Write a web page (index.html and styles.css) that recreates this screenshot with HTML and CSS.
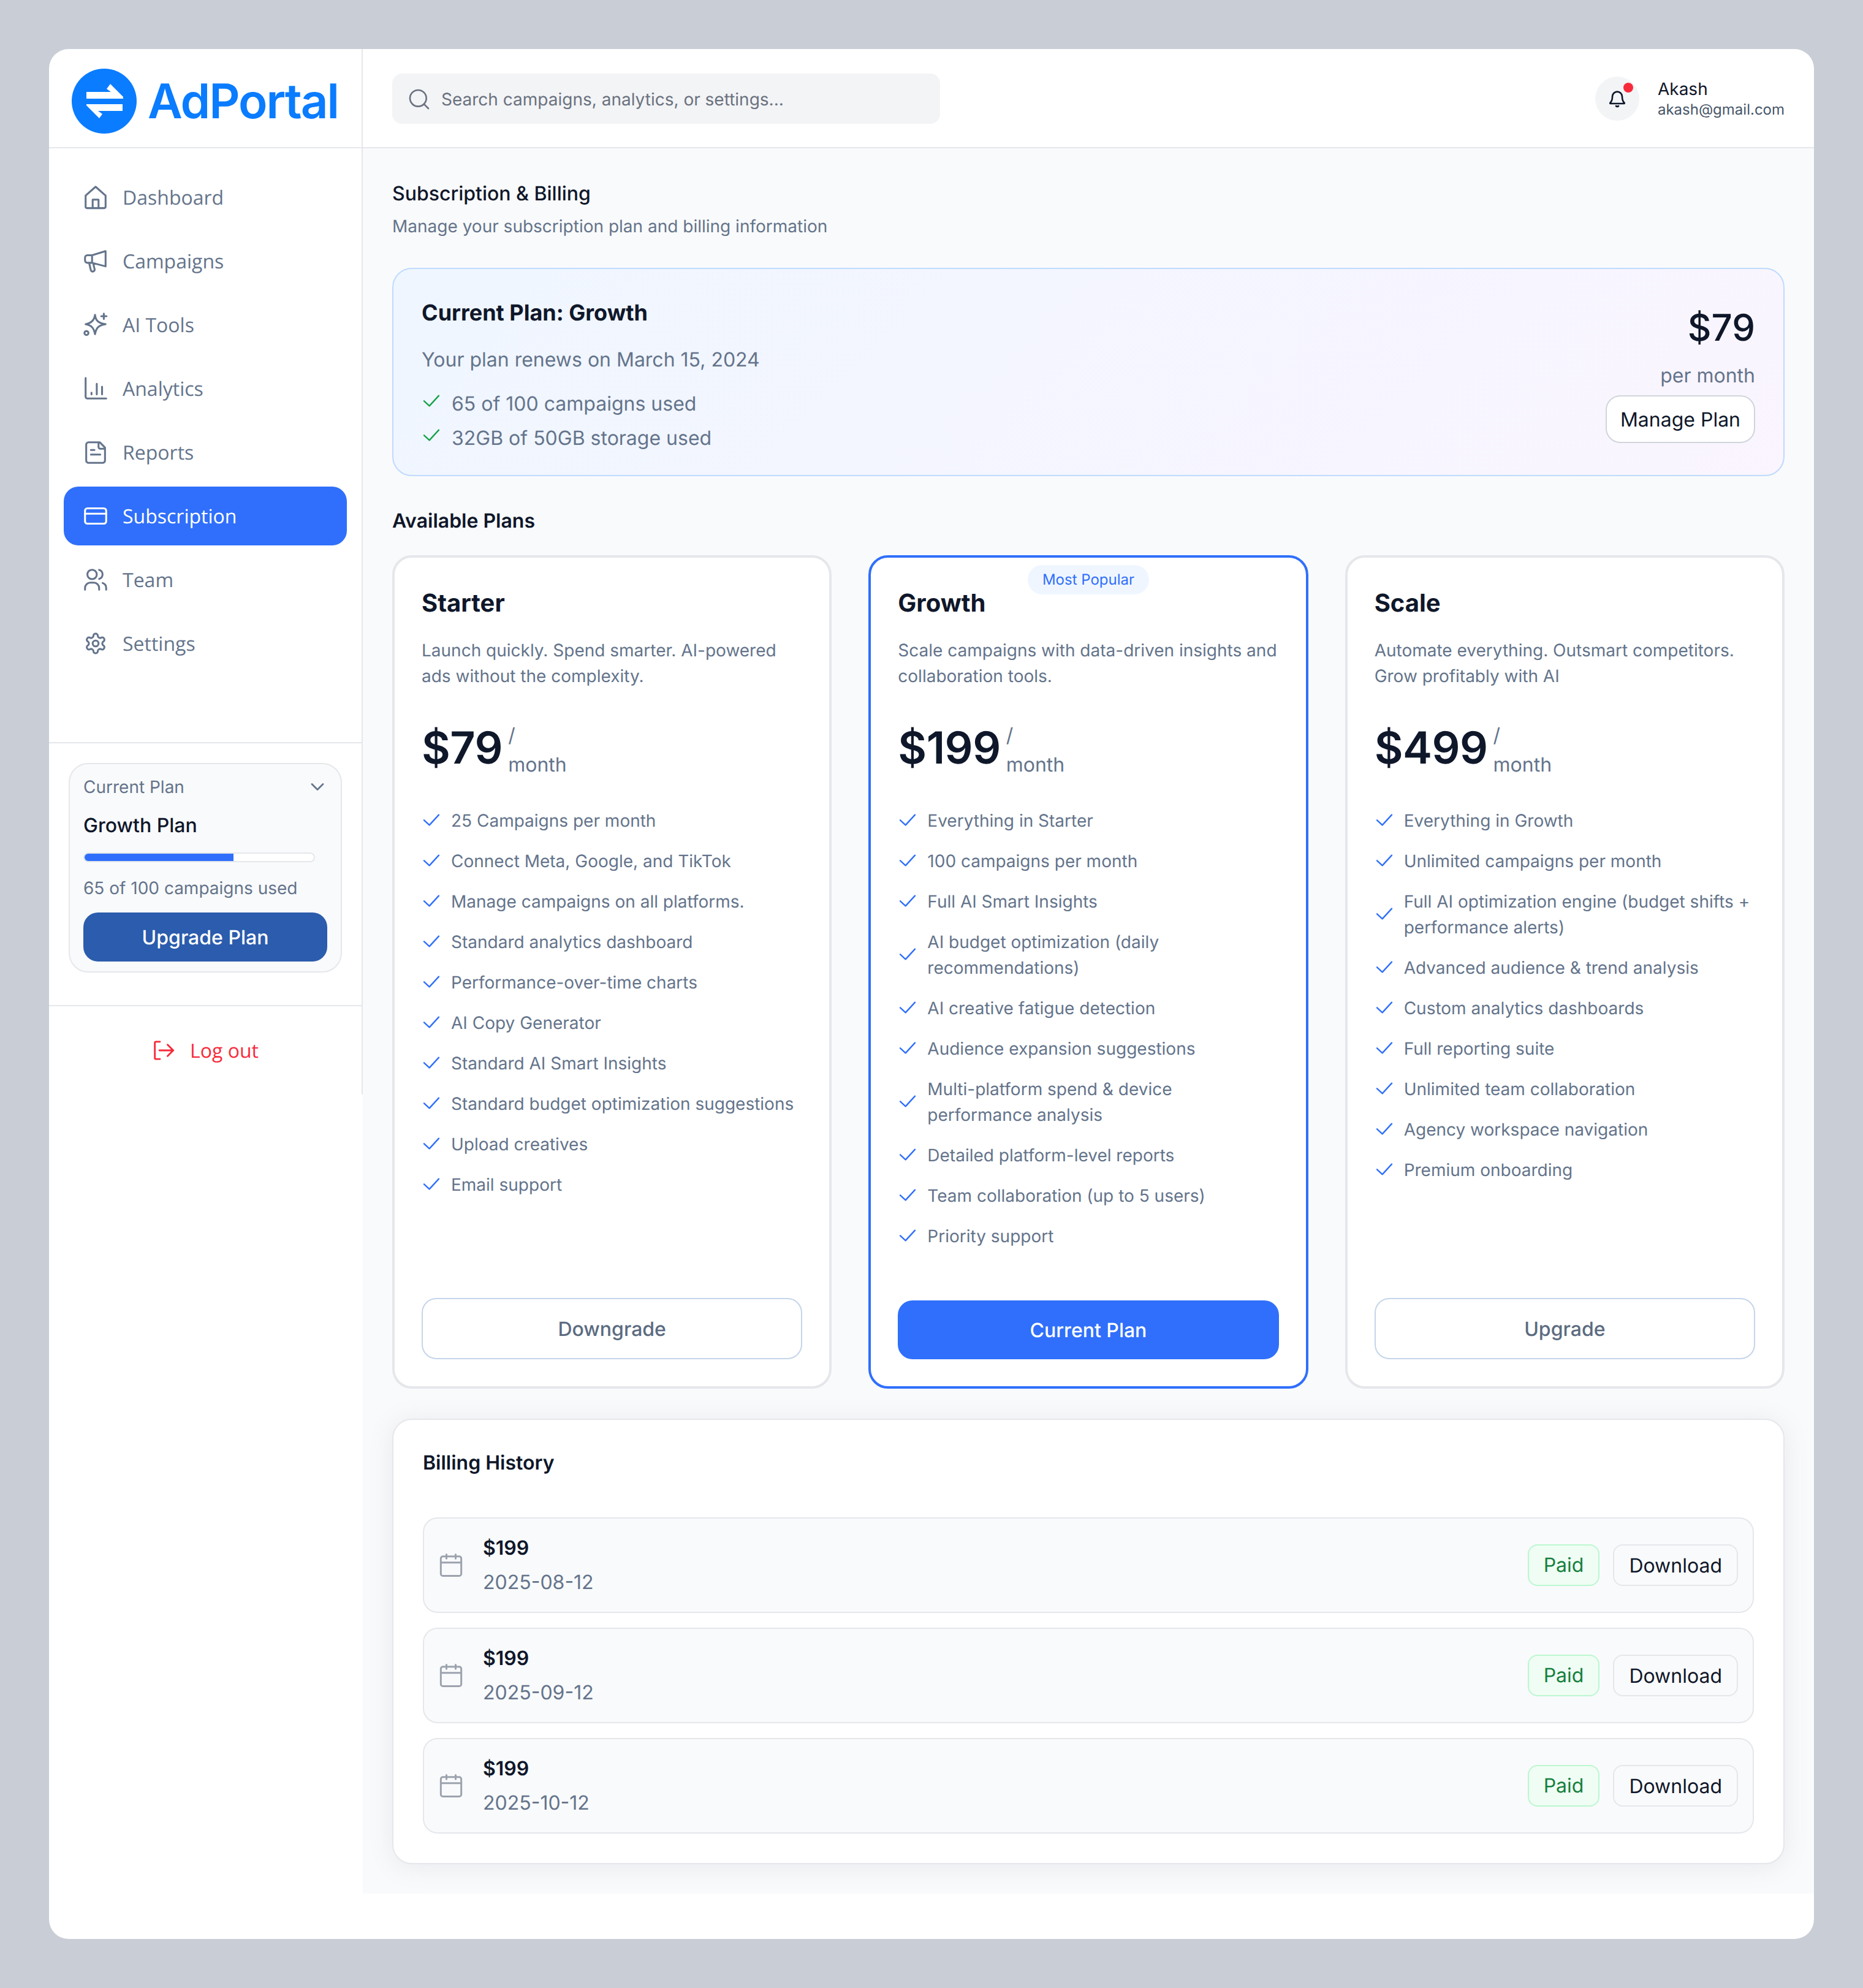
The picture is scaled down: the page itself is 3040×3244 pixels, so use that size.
FILE: index.html
```html
<!DOCTYPE html>
<html lang="en">
<head>
<meta charset="utf-8">
<title>AdPortal - Subscription &amp; Billing</title>
<link rel="stylesheet" href="styles.css">
</head>
<body>
<svg class="defs" aria-hidden="true">
  <symbol id="i-check" viewBox="0 0 24 24"><path d="M21 5 9.5 17.5 3 11.5"/></symbol>
  <symbol id="i-cal" viewBox="0 0 24 24"><rect x="2" y="3.5" width="20" height="19" rx="2"/><path d="M2 9.5h20M7.5 1.5v4M16.5 1.5v4"/></symbol>
</svg>
<div class="frame">
  <aside class="sidebar">
    <div class="brand">
      <svg class="brand-mark" viewBox="0 0 106 106"><circle cx="53" cy="53" r="53" fill="#0a7cff"/><path fill="#fff" d="M24 38h40l-7-5 6-8 21 21v3H24zM83 58v11H43l7 5-5 7-21-21v-2z"/></svg>
      <span class="brand-name">AdPortal</span>
    </div>
    <nav class="nav">
      <a class="nav-item"><svg class="nav-ic" viewBox="0 0 24 24"><path d="M3.5 10.5 12 3l8.500 7.500V20a1.200 1.200 0 0 1-1.200 1.200H4.700A1.200 1.200 0 0 1 3.500 20zM9.500 21v-7h5v7"/></svg>Dashboard</a>
      <a class="nav-item"><svg class="nav-ic" viewBox="0 0 24 24"><path d="M20.500 3.500 9 7H5a2 2 0 0 0-2 2v2.500a2 2 0 0 0 2 2h4l11.500 3zM9 7v6.500M6.500 13.500 8 20a1.700 1.700 0 0 0 3.200-.8L10 14"/></svg>Campaigns</a>
      <a class="nav-item"><svg class="nav-ic" viewBox="0 0 24 24"><path d="M11.500 3.500c.5 4.500 2.300 7 9 8-6 1-8 3-9 8.500-1-5.500-3-7.500-8-8.500 5-1 7.500-3.500 8-8zM19 2.500v4.500M16.800 4.700h4.500"/><circle cx="4.200" cy="19" r="1.700"/></svg>AI Tools</a>
      <a class="nav-item"><svg class="nav-ic" viewBox="0 0 24 24"><path d="M3.500 3v16a1.500 1.500 0 0 0 1.500 1.500h16M8.500 15.500V17M13 8v9M17.500 10.500V17"/></svg>Analytics</a>
      <a class="nav-item"><svg class="nav-ic" viewBox="0 0 24 24"><path d="M6 3.500h9.500L20 8v11a2 2 0 0 1-2 2H6a2 2 0 0 1-2-2V5.500a2 2 0 0 1 2-2zM14.500 4v3.500A1.500 1.500 0 0 0 16 9h3.500M8 10h3M8 14h8"/></svg>Reports</a>
      <a class="nav-item is-active"><svg class="nav-ic" viewBox="0 0 24 24"><rect x="3" y="5.500" width="18" height="13" rx="2"/><path d="M3 10h18"/></svg>Subscription</a>
      <a class="nav-item"><svg class="nav-ic" viewBox="0 0 24 24"><path d="M9 11.500a4 4 0 1 0 0-8 4 4 0 0 0 0 8zM3 20.500V19a4.500 4.500 0 0 1 4.500-4.500h3a4.500 4.500 0 0 1 4.500 4.500v1.500M15 3.600a4 4 0 0 1 0 7.700M18 14.800a4.500 4.500 0 0 1 3 4.200v1.500"/></svg>Team</a>
      <a class="nav-item"><svg class="nav-ic nav-ic-cog" viewBox="-2.400 -2.400 28.800 28.800"><path d="M12.220 2h-.44a2 2 0 0 0-2 2v.18a2 2 0 0 1-1 1.730l-.43.25a2 2 0 0 1-2 0l-.15-.08a2 2 0 0 0-2.730.73l-.22.38a2 2 0 0 0 .73 2.730l.15.1a2 2 0 0 1 1 1.720v.51a2 2 0 0 1-1 1.740l-.15.09a2 2 0 0 0-.73 2.730l.22.38a2 2 0 0 0 2.730.73l.15-.08a2 2 0 0 1 2 0l.43.25a2 2 0 0 1 1 1.730V20a2 2 0 0 0 2 2h.44a2 2 0 0 0 2-2v-.18a2 2 0 0 1 1-1.730l.43-.25a2 2 0 0 1 2 0l.15.08a2 2 0 0 0 2.730-.73l.22-.39a2 2 0 0 0-.73-2.730l-.15-.08a2 2 0 0 1-1-1.740v-.5a2 2 0 0 1 1-1.740l.15-.09a2 2 0 0 0 .73-2.730l-.22-.38a2 2 0 0 0-2.730-.73l-.15.08a2 2 0 0 1-2 0l-.43-.25a2 2 0 0 1-1-1.730V4a2 2 0 0 0-2-2z"/><circle cx="12" cy="12" r="3"/></svg>Settings</a>
    </nav>
    <section class="side-plan">
      <div class="plan-box">
        <div class="plan-box-top"><span>Current Plan</span><svg class="chev" viewBox="0 0 24 24"><path d="m6 9 6 6 6-6"/></svg></div>
        <div class="plan-box-name">Growth Plan</div>
        <div class="progress"><div class="progress-fill"></div></div>
        <div class="plan-box-use">65 of 100 campaigns used</div>
        <button class="btn-upgrade">Upgrade Plan</button>
      </div>
    </section>
    <div class="logout">
      <svg class="logout-ic" viewBox="0 0 24 24"><path d="M9 3.500H5a1 1 0 0 0-1 1v15a1 1 0 0 0 1 1h4M8.500 12H22M16.500 6.500 22 12l-5.500 5.500"/></svg>
      <span>Log out</span>
    </div>
  </aside>
  <div class="column">
    <header class="topbar">
      <div class="search">
        <svg class="search-ic" viewBox="0 0 24 24"><circle cx="11" cy="11" r="8"/><path d="m21 21-4.300-4.300"/></svg>
        <span>Search campaigns, analytics, or settings...</span>
      </div>
      <div class="user">
        <div class="bell">
          <svg class="bell-ic" viewBox="0 0 24 24"><path d="M6 9.500a6 6 0 0 1 12 0c0 4.500 1.300 6.300 2.700 7.700.3.300.1.800-.3.800H3.600c-.4 0-.6-.5-.3-.8C4.700 15.800 6 14 6 9.500zM10.500 21a2 2 0 0 0 3 0"/></svg>
          <span class="bell-dot"></span>
        </div>
        <div class="user-info">
          <div class="user-name">Akash</div>
          <div class="user-mail">akash@gmail.com</div>
        </div>
      </div>
    </header>
    <main class="content">
      <h1 class="page-title">Subscription &amp; Billing</h1>
      <p class="page-sub">Manage your subscription plan and billing information</p>

      <section class="current">
        <div class="current-left">
          <h2 class="current-title">Current Plan: Growth</h2>
          <p class="current-renew">Your plan renews on March 15, 2024</p>
          <ul class="current-list">
            <li><svg class="tick tick-green"><use href="#i-check"/></svg>65 of 100 campaigns used</li>
            <li><svg class="tick tick-green"><use href="#i-check"/></svg>32GB of 50GB storage used</li>
          </ul>
        </div>
        <div class="current-right">
          <div class="current-price">$79</div>
          <div class="current-per">per month</div>
          <button class="btn-manage">Manage Plan</button>
        </div>
      </section>

      <h2 class="section-title">Available Plans</h2>
      <div class="plans">
        <article class="plan">
          <h3 class="plan-name">Starter</h3>
          <p class="plan-desc">Launch quickly. Spend smarter. AI-powered ads without the complexity.</p>
          <div class="plan-price"><span class="amount">$79</span><span class="per">/ month</span></div>
          <ul class="features">
            <li><svg class="tick"><use href="#i-check"/></svg><span>25 Campaigns per month</span></li>
            <li><svg class="tick"><use href="#i-check"/></svg><span>Connect Meta, Google, and TikTok</span></li>
            <li><svg class="tick"><use href="#i-check"/></svg><span>Manage campaigns on all platforms.</span></li>
            <li><svg class="tick"><use href="#i-check"/></svg><span>Standard analytics dashboard</span></li>
            <li><svg class="tick"><use href="#i-check"/></svg><span>Performance-over-time charts</span></li>
            <li><svg class="tick"><use href="#i-check"/></svg><span>AI Copy Generator</span></li>
            <li><svg class="tick"><use href="#i-check"/></svg><span>Standard AI Smart Insights</span></li>
            <li><svg class="tick"><use href="#i-check"/></svg><span>Standard budget optimization suggestions</span></li>
            <li><svg class="tick"><use href="#i-check"/></svg><span>Upload creatives</span></li>
            <li><svg class="tick"><use href="#i-check"/></svg><span>Email support</span></li>
          </ul>
          <button class="btn-plan">Downgrade</button>
        </article>
        <article class="plan plan-featured">
          <span class="badge">Most Popular</span>
          <h3 class="plan-name">Growth</h3>
          <p class="plan-desc">Scale campaigns with data-driven insights and collaboration tools.</p>
          <div class="plan-price"><span class="amount">$199</span><span class="per">/ month</span></div>
          <ul class="features">
            <li><svg class="tick"><use href="#i-check"/></svg><span>Everything in Starter</span></li>
            <li><svg class="tick"><use href="#i-check"/></svg><span>100 campaigns per month</span></li>
            <li><svg class="tick"><use href="#i-check"/></svg><span>Full AI Smart Insights</span></li>
            <li><svg class="tick"><use href="#i-check"/></svg><span>AI budget optimization (daily recommendations)</span></li>
            <li><svg class="tick"><use href="#i-check"/></svg><span>AI creative fatigue detection</span></li>
            <li><svg class="tick"><use href="#i-check"/></svg><span>Audience expansion suggestions</span></li>
            <li><svg class="tick"><use href="#i-check"/></svg><span>Multi-platform spend &amp; device performance analysis</span></li>
            <li><svg class="tick"><use href="#i-check"/></svg><span>Detailed platform-level reports</span></li>
            <li><svg class="tick"><use href="#i-check"/></svg><span>Team collaboration (up to 5 users)</span></li>
            <li><svg class="tick"><use href="#i-check"/></svg><span>Priority support</span></li>
          </ul>
          <button class="btn-plan btn-plan-primary">Current Plan</button>
        </article>
        <article class="plan">
          <h3 class="plan-name">Scale</h3>
          <p class="plan-desc">Automate everything. Outsmart competitors. Grow profitably with AI</p>
          <div class="plan-price"><span class="amount">$499</span><span class="per">/ month</span></div>
          <ul class="features">
            <li><svg class="tick"><use href="#i-check"/></svg><span>Everything in Growth</span></li>
            <li><svg class="tick"><use href="#i-check"/></svg><span>Unlimited campaigns per month</span></li>
            <li><svg class="tick"><use href="#i-check"/></svg><span>Full AI optimization engine (budget shifts + performance alerts)</span></li>
            <li><svg class="tick"><use href="#i-check"/></svg><span>Advanced audience &amp; trend analysis</span></li>
            <li><svg class="tick"><use href="#i-check"/></svg><span>Custom analytics dashboards</span></li>
            <li><svg class="tick"><use href="#i-check"/></svg><span>Full reporting suite</span></li>
            <li><svg class="tick"><use href="#i-check"/></svg><span>Unlimited team collaboration</span></li>
            <li><svg class="tick"><use href="#i-check"/></svg><span>Agency workspace navigation</span></li>
            <li><svg class="tick"><use href="#i-check"/></svg><span>Premium onboarding</span></li>
          </ul>
          <button class="btn-plan">Upgrade</button>
        </article>
      </div>

      <section class="billing">
        <h2 class="billing-title">Billing History</h2>
        <div class="bill-row">
          <svg class="cal"><use href="#i-cal"/></svg>
          <div class="bill-info"><div class="bill-amount">$199</div><div class="bill-date">2025-08-12</div></div>
          <span class="paid">Paid</span><button class="btn-dl">Download</button>
        </div>
        <div class="bill-row">
          <svg class="cal"><use href="#i-cal"/></svg>
          <div class="bill-info"><div class="bill-amount">$199</div><div class="bill-date">2025-09-12</div></div>
          <span class="paid">Paid</span><button class="btn-dl">Download</button>
        </div>
        <div class="bill-row">
          <svg class="cal"><use href="#i-cal"/></svg>
          <div class="bill-info"><div class="bill-amount">$199</div><div class="bill-date">2025-10-12</div></div>
          <span class="paid">Paid</span><button class="btn-dl">Download</button>
        </div>
      </section>
    </main>
  </div>
</div>
</body>
</html>
```
FILE: styles.css
```css
* { box-sizing: border-box; }
html, body { margin: 0; padding: 0; }
body {
  width: 3040px;
  height: 3244px;
  padding: 80px;
  background: #c9cdd6;
  font-family: "Inter", "Liberation Sans", sans-serif;
  color: #0f172a;
  text-rendering: geometricPrecision;
}
h1, h2, h3, p, ul { margin: 0; padding: 0; }
ul { list-style: none; }
button { font-family: inherit; cursor: pointer; text-rendering: geometricPrecision; }
.defs { position: absolute; width: 0; height: 0; }

.frame {
  display: flex;
  align-items: flex-start;
  width: 2880px;
  height: 3084px;
  background: #fff;
  border-radius: 32px;
  overflow: hidden;
}

/* Sidebar */
.sidebar {
  flex: 0 0 512px;
  height: 1706px;
  border-right: 2px solid #e5e7eb;
  display: flex;
  flex-direction: column;
}
.brand {
  height: 162px;
  border-bottom: 2px solid #e5e7eb;
  display: flex;
  align-items: center;
  gap: 18px;
  padding: 9px 0 0 37px;
}
.brand-mark { width: 106px; height: 106px; flex: none; }
.brand-name {
  font-size: 78px;
  font-weight: 600;
  color: #0a7cff;
  letter-spacing: -2px;
  line-height: 1;
}
.nav {
  height: 969px;
  padding: 32px 24px 0;
  display: flex;
  flex-direction: column;
  gap: 8px;
}
.nav-item {
  height: 96px;
  border-radius: 24px;
  display: flex;
  align-items: center;
  gap: 21px;
  padding-left: 29px;
  font-family: "Open Sans", "Liberation Sans", sans-serif;
  font-size: 32px;
  color: #64748b;
}
.nav-ic {
  width: 46px;
  height: 46px;
  flex: none;
  fill: none;
  stroke: currentColor;
  stroke-width: 1.6;
  stroke-linecap: round;
  stroke-linejoin: round;
}
.nav-ic-cog { stroke-width: 1.9; }
.nav-item.is-active { background: #2f6ffb; color: #fff; }

.side-plan {
  height: 431px;
  padding: 32px 32px 0;
  border-top: 2px solid #e5e7eb;
  border-bottom: 2px solid #e5e7eb;
}
.plan-box {
  height: 342px;
  border: 2px solid #e5e7eb;
  border-radius: 32px;
  background: #f9fafb;
  padding: 16px 22px 0;
}
.plan-box-top {
  display: flex;
  justify-content: space-between;
  align-items: center;
  font-size: 28px;
  line-height: 42px;
  color: #64748b;
}
.chev {
  width: 36px;
  height: 36px;
  margin-right: -2px;
  fill: none;
  stroke: #64748b;
  stroke-width: 1.8;
  stroke-linecap: round;
  stroke-linejoin: round;
}
.plan-box-name {
  margin-top: 18px;
  font-size: 32px;
  font-weight: 500;
  line-height: 48px;
}
.progress {
  width: 378px;
  height: 16px;
  margin-top: 20px;
  border: 2px solid #e5e7eb;
  border-radius: 8px;
  background: #fff;
  overflow: hidden;
}
.progress-fill { width: 65%; height: 100%; background: #2f6ffb; }
.plan-box-use {
  margin-top: 21px;
  font-size: 28px;
  line-height: 42px;
  color: #64748b;
}
.btn-upgrade {
  display: block;
  width: 398px;
  height: 80px;
  margin-top: 19px;
  border: 0;
  border-radius: 24px;
  background: #2b5cad;
  color: #fff;
  font-size: 32px;
  font-weight: 500;
}
.logout {
  flex: 1;
  display: flex;
  align-items: center;
  justify-content: center;
  gap: 24px;
  padding-right: 2px;
  font-family: "Open Sans", "Liberation Sans", sans-serif;
  font-size: 32px;
  color: #f72a3a;
}
.logout-ic {
  width: 40px;
  height: 40px;
  fill: none;
  stroke: currentColor;
  stroke-width: 1.7;
  stroke-linecap: round;
  stroke-linejoin: round;
}

/* Column */
.column { flex: 1; min-width: 0; }
.topbar {
  height: 162px;
  padding: 0 48px;
  border-bottom: 2px solid #e5e7eb;
  display: flex;
  align-items: center;
  justify-content: space-between;
}
.search {
  width: 894px;
  height: 82px;
  margin-top: 2px;
  padding-top: 1px;
  border-radius: 16px;
  background: #f3f4f6;
  display: flex;
  align-items: center;
  gap: 16px;
  padding-left: 24px;
  font-size: 28px;
  color: #6b7280;
}
.search-ic {
  width: 40px;
  height: 40px;
  fill: none;
  stroke: #6b7280;
  stroke-width: 1.6;
  stroke-linecap: round;
}
.user { display: flex; align-items: center; gap: 30px; margin-top: 2px; }
.bell {
  position: relative;
  width: 72px;
  height: 72px;
  border-radius: 50%;
  background: #f3f4f6;
  display: flex;
  align-items: center;
  justify-content: center;
}
.bell-ic {
  width: 32px;
  height: 32px;
  fill: none;
  stroke: #0f172a;
  stroke-width: 2;
  stroke-linecap: round;
  stroke-linejoin: round;
}
.bell-dot {
  position: absolute;
  top: 10px;
  right: 10px;
  width: 16px;
  height: 16px;
  border-radius: 50%;
  background: #f72a3a;
}
.user-name { font-size: 28px; line-height: 36px; }
.user-mail { font-size: 24px; line-height: 32px; color: #475569; }

.content { background: #f9fafb; padding: 50px 48px 48px; }
.page-title { font-size: 32px; font-weight: 500; line-height: 48px; }
.page-sub { margin-top: 8px; font-size: 28px; line-height: 42px; color: #64748b; }

.current {
  margin-top: 47px;
  height: 340px;
  border: 2px solid #bfdbfe;
  border-radius: 32px;
  background: linear-gradient(135deg, #eff6ff, #faf5ff);
  padding: 44px 46px 0;
  display: flex;
  justify-content: space-between;
  align-items: flex-start;
}
.current-title { font-size: 36px; font-weight: 700; line-height: 54px; }
.current-renew { margin-top: 26px; font-size: 32px; line-height: 48px; color: #64748b; }
.current-list { margin-top: 24px; display: flex; flex-direction: column; gap: 8px; }
.current-list li {
  display: flex;
  align-items: flex-start;
  gap: 17px;
  font-size: 32px;
  line-height: 48px;
  color: #64748b;
}
.current-list .tick { margin-top: 4px; }
.tick {
  width: 32px;
  height: 32px;
  flex: none;
  fill: none;
  stroke: #2f6ffb;
  stroke-width: 1.8;
  stroke-linecap: round;
  stroke-linejoin: round;
}
.tick-green { stroke: #16a34a; }
.current-right { display: flex; flex-direction: column; align-items: flex-end; }
.current-price { font-size: 60px; font-weight: 500; line-height: 90px; margin-top: 7px; }
.current-per { margin-top: 9px; font-size: 32px; line-height: 48px; color: #64748b; }
.btn-manage {
  margin-top: 8px;
  height: 78px;
  padding: 0 22px;
  border: 2px solid #d1d5db;
  border-radius: 24px;
  background: #fff;
  color: #0f172a;
  font-size: 32px;
}

.section-title { margin-top: 49px; font-size: 32px; font-weight: 600; line-height: 48px; }
.plans {
  margin-top: 32px;
  display: grid;
  grid-template-columns: repeat(3, 1fr);
  gap: 60px;
}
.plan {
  position: relative;
  height: 1360px;
  border: 4px solid #e5e7eb;
  border-radius: 32px;
  background: #fff;
  padding: 44px;
  display: flex;
  flex-direction: column;
}
.plan-featured { border-color: #2f6ffb; }
.badge {
  position: absolute;
  top: 12px;
  left: 50%;
  transform: translateX(-50%);
  height: 48px;
  padding: 0 24px;
  border-radius: 24px;
  background: #eff6ff;
  color: #2f6ffb;
  font-size: 24px;
  line-height: 48px;
  white-space: nowrap;
}
.plan-name { font-size: 40px; font-weight: 700; line-height: 60px; }
.plan-desc { margin-top: 26px; font-size: 28px; line-height: 42px; color: #64748b; }
.plan-price {
  margin-top: 52px;
  height: 96px;
  display: flex;
  align-items: center;
  gap: 9px;
}
.amount { font-size: 72px; font-weight: 600; line-height: 80px; margin-top: -6px; letter-spacing: -.5px; }
.per { width: min-content; font-size: 32px; line-height: 48px; color: #64748b; }
.features { margin-top: 46px; display: flex; flex-direction: column; gap: 24px; }
.features li {
  display: flex;
  align-items: center;
  gap: 16px;
  font-size: 28px;
  line-height: 42px;
  color: #64748b;
}
.btn-plan {
  margin-top: auto;
  height: 100px;
  flex: none;
  border: 2px solid #c5d5ea;
  border-radius: 24px;
  background: #fff;
  color: #5b6b80;
  font-size: 32px;
  font-weight: 500;
}
.btn-plan-primary {
  height: 96px;
  border: 0;
  background: #2f6ffb;
  color: #fff;
}

.billing {
  margin-top: 49px;
  border: 2px solid #e5e7eb;
  border-radius: 32px;
  background: #fff;
  padding: 48px;
  box-shadow: 0 4px 40px rgba(100, 116, 139, .12);
}
.billing-title { font-size: 32px; font-weight: 600; line-height: 48px; margin: -2px 0 65px; }
.bill-row {
  height: 156px;
  margin-top: 24px;
  border: 2px solid #e5e7eb;
  border-radius: 24px;
  background: #f9fafb;
  padding: 0 24px;
  display: flex;
  align-items: center;
}
.billing-title + .bill-row { margin-top: 0; }
.cal {
  width: 40px;
  height: 40px;
  flex: none;
  fill: none;
  stroke: #9ca3af;
  stroke-width: 1.8;
  stroke-linecap: round;
  stroke-linejoin: round;
}
.bill-info { flex: 1; margin-left: 32px; }
.bill-amount { font-size: 32px; font-weight: 600; line-height: 48px; }
.bill-date { margin-top: 8px; font-size: 32px; line-height: 48px; color: #64748b; }
.paid {
  height: 68px;
  padding: 0 24px;
  border: 2px solid #bbf7d0;
  border-radius: 16px;
  background: #f0fdf4;
  color: #15803d;
  font-size: 32px;
  line-height: 64px;
}
.btn-dl {
  margin-left: 22px;
  height: 68px;
  padding: 0 24px;
  border: 2px solid #e5e7eb;
  border-radius: 16px;
  background: #f9fafb;
  color: #0f172a;
  font-size: 32px;
}
```
